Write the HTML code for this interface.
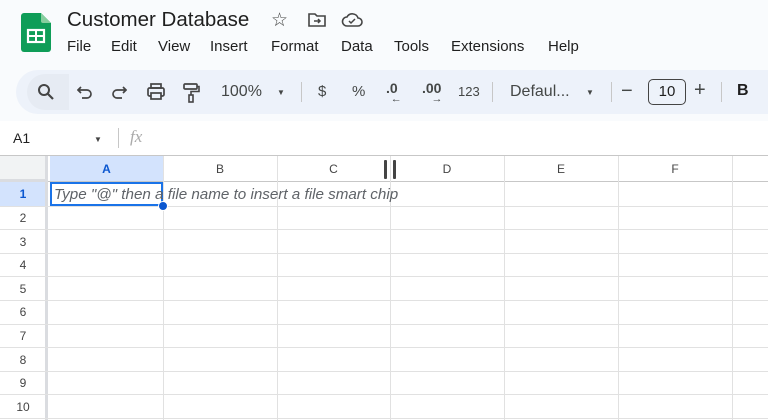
<!DOCTYPE html>
<html><head><meta charset="utf-8"><style>
*{box-sizing:border-box;margin:0;padding:0}
body{width:768px;height:420px;overflow:hidden;background:#f9fbfd;font-family:"Liberation Sans",Arial,sans-serif;color:#1f1f1f;position:relative}
.a{position:absolute}
.tb{left:16px;top:70px;width:780px;height:44px;background:#edf2fa;border-radius:22px}
.ic{position:absolute;top:82px;color:#444746;font-size:15px}
.sep{position:absolute;top:82px;width:1px;height:20px;background:#c7c7c7}
.grid{left:0;top:121px;width:768px;height:299px;background:#fff}
.hl{position:absolute;background:#e1e1e1}
.ch{position:absolute;top:156px;height:26px;line-height:26px;text-align:center;font-size:12px;color:#444}
.rh{position:absolute;left:0;width:46px;text-align:center;font-size:12px;color:#444}
</style></head><body>
<svg class="a" style="left:21px;top:13px" width="30" height="39" viewBox="0 0 30 39"><path d="M3 0h17l10 10v26a3 3 0 0 1-3 3H3a3 3 0 0 1-3-3V3a3 3 0 0 1 3-3z" fill="#0f9d58"/><path d="M20 0v8a2 2 0 0 0 2 2h8z" fill="#87ce9e"/><rect x="7" y="17" width="16" height="12" fill="none" stroke="#fff" stroke-width="2.2"/><line x1="7" y1="23" x2="23" y2="23" stroke="#fff" stroke-width="2"/><line x1="15" y1="17" x2="15" y2="29" stroke="#fff" stroke-width="2"/></svg>
<div class="a" style="left:67px;top:8px;font-size:20.5px;color:#1f1f1f">Customer Database</div>
<div class="a" style="left:271px;top:9px;font-size:19px;color:#444">☆</div>
<svg class="a" style="left:307px;top:12px" width="20" height="16" viewBox="0 0 20 16"><path d="M2 2h6l2 2h8v10H2z" fill="none" stroke="#444" stroke-width="1.6"/><path d="M7 9h6M11 7l2 2-2 2" fill="none" stroke="#444" stroke-width="1.5"/></svg>
<svg class="a" style="left:341px;top:12px" width="22" height="16" viewBox="0 0 22 16"><path d="M6 14h11a4 4 0 0 0 0-8 6 6 0 0 0-11-1 4.5 4.5 0 0 0 0 9z" fill="none" stroke="#444" stroke-width="1.6"/><path d="M8 9l2 2 4-4" fill="none" stroke="#444" stroke-width="1.5"/></svg>
<div class="a" style="left:67px;top:38px;font-size:15px;color:#1f1f1f">
<span class="a" style="left:0">File</span><span class="a" style="left:44px">Edit</span><span class="a" style="left:91px">View</span><span class="a" style="left:143px">Insert</span><span class="a" style="left:204px">Format</span><span class="a" style="left:274px">Data</span><span class="a" style="left:327px">Tools</span><span class="a" style="left:384px">Extensions</span><span class="a" style="left:481px">Help</span></div>
<div class="a tb"></div>
<div class="a" style="left:27px;top:74px;width:42px;height:36px;background:#e6ebf3;border-radius:18px 0 0 18px"></div>
<svg class="a" style="left:37px;top:83px" width="18" height="18" viewBox="0 0 18 18"><circle cx="7" cy="7" r="5" fill="none" stroke="#444" stroke-width="2"/><line x1="11" y1="11" x2="16" y2="16" stroke="#444" stroke-width="2.2"/></svg>
<svg class="a" style="left:77px;top:84px" width="16" height="16" viewBox="0 0 16 16"><path d="M4 3L1 6l3 3M1 6h9a4 4 0 0 1 0 8H5" fill="none" stroke="#444" stroke-width="1.7"/></svg>
<svg class="a" style="left:111px;top:84px" width="16" height="16" viewBox="0 0 16 16"><path d="M12 3l3 3-3 3M15 6H6a4 4 0 0 0 0 8h5" fill="none" stroke="#444" stroke-width="1.7"/></svg>
<svg class="a" style="left:146px;top:82px" width="20" height="20" viewBox="0 0 20 20"><rect x="5" y="2" width="10" height="4" fill="none" stroke="#444" stroke-width="1.7"/><rect x="2" y="6" width="16" height="8" rx="1.5" fill="none" stroke="#444" stroke-width="1.7"/><rect x="5" y="11" width="10" height="6" fill="#edf2fa" stroke="#444" stroke-width="1.7"/></svg>
<svg class="a" style="left:182px;top:82px" width="18" height="22" viewBox="0 0 18 22"><rect x="2" y="2" width="13" height="5" rx="1" fill="none" stroke="#444" stroke-width="1.7"/><path d="M15 4.5h2v5H9v4" fill="none" stroke="#444" stroke-width="1.6"/><rect x="7" y="13" width="4" height="7" fill="none" stroke="#444" stroke-width="1.6"/></svg>
<div class="ic" style="left:221px;top:83px;font-size:16px">100%</div>
<div class="ic" style="left:277px;top:88px;font-size:8px">▼</div>
<div class="sep" style="left:301px"></div>
<div class="ic" style="left:318px;top:83px">$</div>
<div class="ic" style="left:352px;top:83px">%</div>
<div class="ic" style="left:386px;top:80px;font-size:14px;font-weight:bold">.0<span style="font-size:11px;position:relative;left:-7px;top:9px">←</span></div>
<div class="ic" style="left:422px;top:80px;font-size:14px;font-weight:bold">.00<span style="font-size:11px;position:relative;left:-10px;top:9px">→</span></div>
<div class="ic" style="left:458px;top:84px;font-size:13px">123</div>
<div class="sep" style="left:492px"></div>
<div class="ic" style="left:510px;top:83px;font-size:16px">Defaul...</div>
<div class="ic" style="left:586px;top:88px;font-size:8px">▼</div>
<div class="sep" style="left:611px"></div>
<div class="ic" style="left:621px;top:80px;font-size:20px">−</div>
<div class="a" style="left:648px;top:79px;width:38px;height:26px;border:1.5px solid #444;border-radius:5px;text-align:center;line-height:23px;font-size:15px;color:#1f1f1f">10</div>
<div class="ic" style="left:694px;top:79px;font-size:20px">+</div>
<div class="sep" style="left:721px"></div>
<div class="ic" style="left:737px;top:82px;font-size:16px;font-weight:bold;color:#1f1f1f">B</div>
<div class="a grid"></div>
<div class="a" style="left:13px;top:130px;font-size:14px">A1</div>
<div class="a" style="left:94px;top:135px;font-size:8px;color:#444">▼</div>
<div class="a" style="left:118px;top:128px;width:1px;height:20px;background:#c7c7c7"></div>
<div class="a" style="left:130px;top:127px;font-size:17px;font-style:italic;font-family:'Liberation Serif',serif;color:#aaa">fx</div>
<div class="hl" style="left:0;top:155px;width:768px;height:1px;background:#c7c7c7"></div>
<div class="a" style="left:0;top:156px;width:45px;height:23px;background:#f1f3f4"></div>
<div class="a" style="left:50px;top:156px;width:113px;height:26px;background:#d3e3fd"></div>
<div class="a" style="left:0;top:182px;width:48px;height:24px;background:#d3e3fd"></div>
<div class="hl" style="left:45px;top:156px;width:3px;height:264px;background:#dadce0"></div>
<div class="hl" style="left:0;top:179px;width:48px;height:3px;background:#dadce0"></div>
<div class="hl" style="left:48px;top:181px;width:720px;height:1px;background:#c7c7c7"></div>
<div class="hl" style="left:163px;top:156px;width:1px;height:264px"></div>
<div class="hl" style="left:277px;top:156px;width:1px;height:264px"></div>
<div class="hl" style="left:390px;top:156px;width:1px;height:264px"></div>
<div class="hl" style="left:504px;top:156px;width:1px;height:264px"></div>
<div class="hl" style="left:618px;top:156px;width:1px;height:264px"></div>
<div class="hl" style="left:732px;top:156px;width:1px;height:264px"></div>
<div class="a" style="left:384px;top:160px;width:3px;height:19px;background:#444;border-radius:1px"></div>
<div class="a" style="left:393px;top:160px;width:3px;height:19px;background:#444;border-radius:1px"></div>
<div class="ch" style="left:50px;width:113px;font-weight:bold;color:#0b57d0">A</div>
<div class="ch" style="left:163px;width:114px">B</div>
<div class="ch" style="left:277px;width:113px">C</div>
<div class="ch" style="left:390px;width:114px">D</div>
<div class="ch" style="left:504px;width:114px">E</div>
<div class="ch" style="left:618px;width:114px">F</div>
<div class="hl" style="left:0;top:205.6px;width:768px;height:1px"></div>
<div class="hl" style="left:0;top:229.2px;width:768px;height:1px"></div>
<div class="hl" style="left:0;top:252.8px;width:768px;height:1px"></div>
<div class="hl" style="left:0;top:276.4px;width:768px;height:1px"></div>
<div class="hl" style="left:0;top:300px;width:768px;height:1px"></div>
<div class="hl" style="left:0;top:323.6px;width:768px;height:1px"></div>
<div class="hl" style="left:0;top:347.2px;width:768px;height:1px"></div>
<div class="hl" style="left:0;top:370.8px;width:768px;height:1px"></div>
<div class="hl" style="left:0;top:394.4px;width:768px;height:1px"></div>
<div class="hl" style="left:0;top:418px;width:768px;height:1px"></div>
<div class="rh" style="top:187px;font-weight:bold;color:#0b57d0">1</div>
<div class="rh" style="top:211px">2</div>
<div class="rh" style="top:235px">3</div>
<div class="rh" style="top:258px">4</div>
<div class="rh" style="top:282px">5</div>
<div class="rh" style="top:305px">6</div>
<div class="rh" style="top:329px">7</div>
<div class="rh" style="top:353px">8</div>
<div class="rh" style="top:376px">9</div>
<div class="rh" style="top:400px">10</div>
<div class="a" style="left:50px;top:182px;width:113px;height:24px;border:2px solid #1a73e8"></div>
<div class="a" style="left:54px;top:186px;font-size:15.2px;font-style:italic;color:#5f6368;white-space:nowrap">Type "@" then a file name to insert a file smart chip</div>
<div class="a" style="left:158px;top:201px;width:10px;height:10px;border-radius:50%;background:#0b57d0;border:1px solid #fff"></div>
</body></html>
